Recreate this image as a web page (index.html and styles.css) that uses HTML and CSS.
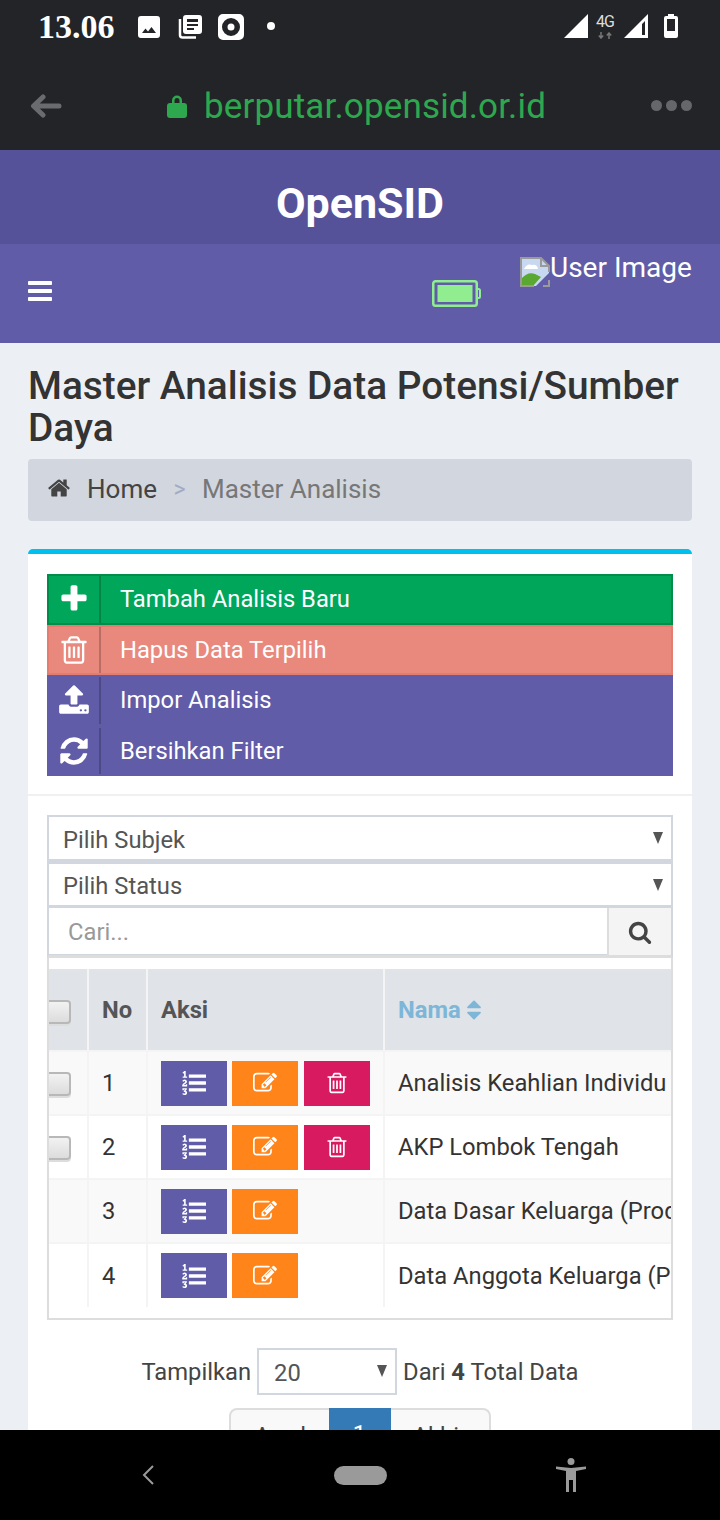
FILE: index.html
```html
<!DOCTYPE html>
<html lang="id">
<head>
  <meta charset="UTF-8">
  <meta name="viewport" content="width=device-width, initial-scale=1.0">
  <title>Master Analisis - OpenSID</title>
  <link rel="stylesheet" href="styles.css">
</head>
<body>
  <svg class="sprites" xmlns="http://www.w3.org/2000/svg">
    <symbol id="i-plus" viewBox="0 0 1792 1792"><path d="M1600 736v192q0 40-28 68t-68 28h-416v416q0 40-28 68t-68 28h-192q-40 0-68-28t-28-68v-416h-416q-40 0-68-28t-28-68v-192q0-40 28-68t68-28h416v-416q0-40 28-68t68-28h192q40 0 68 28t28 68v416h416q40 0 68 28t28 68z"/></symbol>
    <symbol id="i-trash" viewBox="0 0 1792 1792"><path d="M704 736v576q0 14-9 23t-23 9h-64q-14 0-23-9t-9-23v-576q0-14 9-23t23-9h64q14 0 23 9t9 23zm256 0v576q0 14-9 23t-23 9h-64q-14 0-23-9t-9-23v-576q0-14 9-23t23-9h64q14 0 23 9t9 23zm256 0v576q0 14-9 23t-23 9h-64q-14 0-23-9t-9-23v-576q0-14 9-23t23-9h64q14 0 23 9t9 23zm128 724v-948h-896v948q0 22 7 40.5t14.5 27 10.5 8.5h832q3 0 10.5-8.5t14.5-27 7-40.5zm-672-1076h448l-48-117q-7-9-17-11h-317q-10 2-17 11zm928 32v64q0 14-9 23t-23 9h-96v948q0 83-47 143.5t-113 60.5h-832q-66 0-113-58.5t-47-141.5v-952h-96q-14 0-23-9t-9-23v-64q0-14 9-23t23-9h309l70-167q15-37 54-63t79-26h320q40 0 79 26t54 63l70 167h309q14 0 23 9t9 23z"/></symbol>
    <symbol id="i-upload" viewBox="0 0 1792 1792"><path d="M1344 1472q0-26-19-45t-45-19-45 19-19 45 19 45 45 19 45-19 19-45zm256 0q0-26-19-45t-45-19-45 19-19 45 19 45 45 19 45-19 19-45zm128-224v320q0 40-28 68t-68 28h-1472q-40 0-68-28t-28-68v-320q0-40 28-68t68-28h427q21 56 70.5 92t110.5 36h256q61 0 110.5-36t70.5-92h427q40 0 68 28t28 68zm-325-648q-17 40-59 40h-256v448q0 26-19 45t-45 19h-256q-26 0-45-19t-19-45v-448h-256q-42 0-59-40-17-39 14-69l448-448q18-19 45-19t45 19l448 448q31 30 14 69z"/></symbol>
    <symbol id="i-refresh" viewBox="0 0 1792 1792"><path d="M1639 1056q0 5-1 7-64 268-268 434.5t-478 166.5q-146 0-282.5-55t-243.5-157l-129 129q-19 19-45 19t-45-19-19-45v-448q0-26 19-45t45-19h448q26 0 45 19t19 45-19 45l-137 137q71 66 161 102t187 36q134 0 250-65t186-179q11-17 53-117 8-23 30-23h192q13 0 22.5 9.5t9.5 22.5zm25-800v448q0 26-19 45t-45 19h-448q-26 0-45-19t-19-45 19-45l138-138q-148-137-349-137-134 0-250 65t-186 179q-11 17-53 117-8 23-30 23h-199q-13 0-22.5-9.5t-9.5-22.5v-7q65-268 270-434.5t480-166.5q146 0 284 55.5t245 156.5l130-129q19-19 45-19t45 19 19 45z"/></symbol>
    <symbol id="i-search" viewBox="0 0 1792 1792"><path d="M1216 832q0-185-131.5-316.5t-316.5-131.5-316.5 131.5-131.5 316.5 131.5 316.5 316.5 131.5 316.5-131.5 131.5-316.5zm512 832q0 52-38 90t-90 38q-54 0-90-38l-343-342q-179 124-399 124-143 0-273.5-55.5t-225-150-150-225-55.5-273.5 55.5-273.5 150-225 225-150 273.5-55.5 273.5 55.5 225 150 150 225 55.5 273.5q0 220-124 399l343 343q37 37 37 90z"/></symbol>
    <symbol id="i-home" viewBox="0 0 1792 1792"><path d="M1472 992v480q0 26-19 45t-45 19h-384v-384h-256v384h-384q-26 0-45-19t-19-45v-480q0-1 .5-3t.5-3l575-474 575 474q1 2 1 6zm223-69l-62 74q-8 9-21 11h-3q-13 0-21-7l-692-577-692 577q-12 8-24 7-13-2-21-11l-62-74q-8-10-7-23.5t11-20.5l719-599q32-26 76-26t76 26l244 204v-195q0-14 9-23t23-9h192q14 0 23 9t9 23v408l219 182q10 8 11 21.5t-7 23.5z"/></symbol>
    <symbol id="i-bars" viewBox="0 0 1792 1792"><path d="M1664 1344v128q0 26-19 45t-45 19h-1408q-26 0-45-19t-19-45v-128q0-26 19-45t45-19h1408q26 0 45 19t19 45zm0-512v128q0 26-19 45t-45 19h-1408q-26 0-45-19t-19-45v-128q0-26 19-45t45-19h1408q26 0 45 19t19 45zm0-512v128q0 26-19 45t-45 19h-1408q-26 0-45-19t-19-45v-128q0-26 19-45t45-19h1408q26 0 45 19t19 45z"/></symbol>
    <symbol id="i-sort" viewBox="0 0 1792 1792"><path d="M1408 1088q0 26-19 45l-448 448q-19 19-45 19t-45-19l-448-448q-19-19-19-45t19-45 45-19h896q26 0 45 19t19 45zm0-384q0 26-19 45t-45 19h-896q-26 0-45-19t-19-45 19-45l448-448q19-19 45-19t45 19l448 448q19 19 19 45z"/></symbol>
    <symbol id="i-edit" viewBox="0 0 1792 1792"><path d="M888 1184l116-116-152-152-116 116v56h96v96h56zm440-720q-16-16-33 1l-350 350q-17 17-1 33t33-1l350-350q17-17 1-33zm80 594v190q0 119-84.5 203.5t-203.5 84.5h-832q-119 0-203.5-84.5t-84.5-203.5v-832q0-119 84.5-203.5t203.5-84.5h832q63 0 117 25 15 7 18 23 3 17-9 29l-49 49q-14 14-32 8-23-6-45-6h-832q-66 0-113 47t-47 113v832q0 66 47 113t113 47h832q66 0 113-47t47-113v-126q0-13 9-22l64-64q15-15 35-7t20 29zm-96-738l288 288-672 672h-288v-288zm444 132l-92 92-288-288 92-92q28-28 68-28t68 28l152 152q28 28 28 68t-28 68z"/></symbol>
    <symbol id="i-list" viewBox="0 0 1792 1792"><path d="M381 1620q0 80-54.5 126t-135.5 46q-106 0-172-66l57-88q49 45 106 45 29 0 50.5-14.5t21.5-42.5q0-64-105-56l-26-56q8-10 32.5-43.5t42.5-54 37-38.5v-1q-16 0-48.5 1t-48.5 1v53h-106v-152h333v88l-95 115q51 12 81 49t30 88zm2-627v159h-362q-6-36-6-54 0-51 23.5-93t56.5-68 66-47.5 56.5-43.5 23.5-45q0-25-14.5-38.5t-39.5-13.5q-46 0-81 58l-85-59q24-51 71.5-79.5t105.5-28.5q73 0 123 41.5t50 112.5q0 50-34 91.5t-75 64.5-75.5 50.5-35.5 52.5h127v-60h105zm1409 319v192q0 13-9.5 22.5t-22.5 9.5h-1216q-13 0-22.5-9.5t-9.5-22.5v-192q0-14 9-23t23-9h1216q13 0 22.5 9.5t9.5 22.5zm-1408-899v99h-335v-99h107q0-41 .5-122t.5-121v-12h-2q-8 17-50 54l-71-76 136-127h106v404h108zm1408 387v192q0 13-9.5 22.5t-22.5 9.5h-1216q-13 0-22.5-9.5t-9.5-22.5v-192q0-14 9-23t23-9h1216q13 0 22.5 9.5t9.5 22.5zm0-512v192q0 13-9.5 22.5t-22.5 9.5h-1216q-13 0-22.5-9.5t-9.5-22.5v-192q0-14 9-23t23-9h1216q13 0 22.5 9.5t9.5 22.5z"/></symbol>
  </svg>

  <div class="phone">
    <div class="chrome">
      <div class="statusbar">
        <span class="clock">13.06</span>
        <svg class="st st-photo" viewBox="0 0 22 22"><path fill="#fff" fill-rule="evenodd" d="M3 0h16a3 3 0 0 1 3 3v16a3 3 0 0 1-3 3H3a3 3 0 0 1-3-3V3a3 3 0 0 1 3-3zM4 17h14l-4.500-6-3.500 4.500-2.500-3z"/></svg>
        <svg class="st st-news" viewBox="0 0 24 24"><path fill="none" stroke="#fff" stroke-width="2.500" d="M2 4v16a2.500 2.500 0 0 0 2.500 2.500H18"/><path fill="#fff" fill-rule="evenodd" d="M8 0h13a3 3 0 0 1 3 3v13a3 3 0 0 1-3 3H8a3 3 0 0 1-3-3V3a3 3 0 0 1 3-3zM9 4v3h11V4zM9 9v2h11V9zM9 13v2h7v-2z"/></svg>
        <svg class="st st-disc" viewBox="0 0 26 26"><path fill="#fff" fill-rule="evenodd" d="M5 0h16a5 5 0 0 1 5 5v16a5 5 0 0 1-5 5H5a5 5 0 0 1-5-5V5a5 5 0 0 1 5-5zM13 4a9 9 0 1 0 0 18 9 9 0 0 0 0-18zM13 9.500a3.500 3.500 0 1 1 0 7 3.500 3.500 0 0 1 0-7z"/></svg>
        <span class="st-dot"></span>
        <span class="st-spacer"></span>
        <svg class="st st-signal" viewBox="0 0 24 24"><path fill="#fff" d="M24 0v24H0z"/></svg>
        <span class="st-net">4G<svg class="st-arrows" viewBox="0 0 14 7"><path fill="none" stroke="#777" stroke-width="1.500" d="M3 0v6M.8 3.500 3 6l2.200-2.500M11 7V1M8.800 3.500 11 1l2.200 2.500"/></svg></span>
        <svg class="st st-signal2" viewBox="0 0 24 24"><path fill="#fff" fill-rule="evenodd" d="M24 0v24H0zM21 7l-3 3v11h3z"/></svg>
        <svg class="st st-batt" viewBox="0 0 14 24"><path fill="#fff" fill-rule="evenodd" d="M4 0h6v2h2a2 2 0 0 1 2 2v18a2 2 0 0 1-2 2H2a2 2 0 0 1-2-2V4a2 2 0 0 1 2-2h2zM3 5v12h8V5z"/></svg>
      </div>
      <div class="urlbar">
        <svg class="url-back" viewBox="0 0 32 24"><path fill="none" stroke="#6a6b6f" stroke-width="5" stroke-linecap="round" stroke-linejoin="round" d="M13 3 3.500 12 13 21M4 12h25"/></svg>
        <svg class="url-lock" viewBox="0 0 20 24"><path fill="#2ea84f" d="M5 9V6.500a5 5 0 0 1 10 0V9h2a3 3 0 0 1 3 3v9a3 3 0 0 1-3 3H3a3 3 0 0 1-3-3v-9a3 3 0 0 1 3-3zm2.500 0h5V6.500a2.500 2.500 0 0 0-5 0z"/></svg>
        <span class="url-text">berputar.opensid.or.id</span>
        <span class="url-dots"><i></i><i></i><i></i></span>
      </div>
    </div>

    <div class="viewport">
      <header class="logo">OpenSID</header>
      <nav class="navbar">
        <svg class="ico nav-bars"><use href="#i-bars"/></svg>
        <svg class="nav-batt" viewBox="0 0 49 27"><path fill="none" stroke="#90ee90" stroke-width="2.500" d="M3.500 1.250h39a2.250 2.250 0 0 1 2.250 2.250v20a2.250 2.250 0 0 1-2.250 2.250h-39a2.250 2.250 0 0 1-2.250-2.250v-20a2.250 2.250 0 0 1 2.250-2.250z"/><path fill="#90ee90" d="M5.500 5h35v17h-35z"/><path fill="none" stroke="#90ee90" stroke-width="2" d="M45 9h1.500a1.500 1.500 0 0 1 1.500 1.500v6a1.500 1.500 0 0 1-1.500 1.500H45"/></svg>
        <div class="nav-user">
          <svg class="broken" viewBox="0 0 30 30">
            <path fill="#c8d8f0" d="M1 1h20l8 8v7L16 29H1z"/>
            <path fill="#fff" d="M4 12q3-6 8-4 5-1 6 4z"/>
            <path fill="#5aa832" d="M1 29v-7q7-8 14-5l6 3-8 9z"/>
            <path fill="none" stroke="#9a9a9a" stroke-width="2" d="M29 15V9l-8-8H1v28h13M21 1v8h8M23 29h6v-6"/>
          </svg>
          <span>User Image</span>
        </div>
      </nav>

      <main class="content">
        <h1>Master Analisis Data Potensi/Sumber Daya</h1>
        <ol class="breadcrumb">
          <li><svg class="ico crumb-home"><use href="#i-home"/></svg>Home</li>
          <li class="crumb-sep">&gt;</li>
          <li class="crumb-active">Master Analisis</li>
        </ol>

        <section class="box">
          <div class="actions">
            <a class="act act-green"><span class="act-ico"><svg class="ico"><use href="#i-plus"/></svg></span>Tambah Analisis Baru</a>
            <a class="act act-salmon"><span class="act-ico"><svg class="ico"><use href="#i-trash"/></svg></span>Hapus Data Terpilih</a>
            <a class="act act-purple"><span class="act-ico"><svg class="ico"><use href="#i-upload"/></svg></span>Impor Analisis</a>
            <a class="act act-purple"><span class="act-ico"><svg class="ico"><use href="#i-refresh"/></svg></span>Bersihkan Filter</a>
          </div>

          <div class="box-body">
            <div class="fake-select">Pilih Subjek</div>
            <div class="fake-select">Pilih Status</div>
            <div class="search">
              <div class="search-input">Cari...</div>
              <div class="search-btn"><svg class="ico"><use href="#i-search"/></svg></div>
            </div>

            <div class="table-wrap">
              <table class="data">
                <thead>
                  <tr>
                    <th class="c-check"><span class="check"></span></th>
                    <th class="c-no">No</th>
                    <th class="c-aksi">Aksi</th>
                    <th class="c-nama"><span class="sortable">Nama <svg class="ico"><use href="#i-sort"/></svg></span></th>
                  </tr>
                </thead>
                <tbody>
                  <tr>
                    <td class="c-check"><span class="check"></span></td>
                    <td>1</td>
                    <td><div class="btns"><a class="btn b-purple"><svg class="ico"><use href="#i-list"/></svg></a><a class="btn b-orange"><svg class="ico"><use href="#i-edit"/></svg></a><a class="btn b-pink"><svg class="ico"><use href="#i-trash"/></svg></a></div></td>
                    <td>Analisis Keahlian Individu</td>
                  </tr>
                  <tr>
                    <td class="c-check"><span class="check"></span></td>
                    <td>2</td>
                    <td><div class="btns"><a class="btn b-purple"><svg class="ico"><use href="#i-list"/></svg></a><a class="btn b-orange"><svg class="ico"><use href="#i-edit"/></svg></a><a class="btn b-pink"><svg class="ico"><use href="#i-trash"/></svg></a></div></td>
                    <td>AKP Lombok Tengah</td>
                  </tr>
                  <tr>
                    <td class="c-check"></td>
                    <td>3</td>
                    <td><div class="btns"><a class="btn b-purple"><svg class="ico"><use href="#i-list"/></svg></a><a class="btn b-orange"><svg class="ico"><use href="#i-edit"/></svg></a></div></td>
                    <td>Data Dasar Keluarga (Prodeskel)</td>
                  </tr>
                  <tr>
                    <td class="c-check"></td>
                    <td>4</td>
                    <td><div class="btns"><a class="btn b-purple"><svg class="ico"><use href="#i-list"/></svg></a><a class="btn b-orange"><svg class="ico"><use href="#i-edit"/></svg></a></div></td>
                    <td>Data Anggota Keluarga (Prodeskel)</td>
                  </tr>
                </tbody>
              </table>
            </div>

            <div class="pager-info">
              Tampilkan
              <div class="fake-select per-page">20</div>
              <span>Dari <b>4</b> Total Data</span>
            </div>
            <ul class="pagination">
              <li>Awal</li>
              <li class="active">1</li>
              <li>Akhir</li>
            </ul>
          </div>
        </section>
      </main>
    </div>

    <div class="navpad">
      <svg class="pad-back" viewBox="0 0 12 20"><path fill="none" stroke="#9a9a9a" stroke-width="2" d="M11 1 2 10l9 9"/></svg>
      <span class="pad-home"></span>
      <svg class="pad-a11y" viewBox="0 0 30 34"><circle cx="15" cy="3.500" r="3.500" fill="#9a9a9a"/><path fill="#9a9a9a" d="M0 8.500 15 10l15-1.500v2.500l-10 2v21h-3V22h-4v12h-3V13L0 11z"/></svg>
    </div>
  </div>
</body>
</html>
```

FILE: styles.css
```css
* {
  box-sizing: border-box;
}
html, body {
  margin: 0;
  padding: 0;
}
body {
  font-family: Roboto, "Liberation Sans", sans-serif;
  font-size: 23.75px;
  color: #333;
  background: #000;
}
.sprites {
  display: none;
}
.ico {
  display: block;
  fill: currentColor;
}
.phone {
  width: 720px;
  height: 1520px;
  display: flex;
  flex-direction: column;
  overflow: hidden;
}

/* android status bar and browser url bar */
.chrome {
  height: 150px;
  flex: none;
  background: #232427;
}
.statusbar {
  height: 60px;
  padding: 11px 42px 0 38px;
  display: flex;
  align-items: flex-start;
}
.clock {
  font-family: "Liberation Serif", serif;
  font-weight: 700;
  font-size: 34px;
  line-height: 32px;
  color: #fff;
  width: 100px;
}
.st {
  display: block;
  flex: none;
}
.st-photo {
  width: 22px;
  height: 22px;
  margin-top: 5px;
}
.st-news {
  width: 24px;
  height: 24px;
  margin: 4px 0 0 18px;
}
.st-disc {
  width: 26px;
  height: 26px;
  margin: 3px 0 0 16px;
}
.st-dot {
  width: 8px;
  height: 8px;
  border-radius: 50%;
  background: #fff;
  margin: 11px 0 0 23px;
}
.st-spacer {
  flex: 1;
}
.st-signal, .st-signal2 {
  width: 24px;
  height: 24px;
  margin-top: 3px;
}
.st-net {
  width: 18px;
  margin: 3px 0 0 8px;
  color: #ddd;
  font-size: 16px;
  line-height: 16px;
  letter-spacing: -1px;
  text-align: center;
  white-space: nowrap;
}
.st-arrows {
  display: block;
  width: 14px;
  height: 7px;
  margin: 2px auto 0;
}
.st-signal2 {
  margin-left: 10px;
}
.st-batt {
  width: 14px;
  height: 24px;
  margin: 3px 0 0 16px;
}
.urlbar {
  height: 90px;
  padding: 0 28px 0 30px;
  display: flex;
  align-items: center;
}
.url-back {
  width: 32px;
  height: 24px;
  flex: none;
  margin-top: 1px;
}
.url-lock {
  width: 20px;
  height: 24px;
  flex: none;
  margin: 1px 0 0 105px;
}
.url-text {
  margin-left: 17px;
  font-size: 35px;
  letter-spacing: 0.15px;
  line-height: 40px;
  color: #2ea84f;
  flex: 1;
  margin-top: 4px;
}
.url-dots {
  display: flex;
  gap: 4px;
}
.url-dots i {
  width: 11px;
  height: 11px;
  border-radius: 50%;
  background: #66676b;
}

/* page */
.viewport {
  flex: 1;
  min-height: 0;
  overflow: hidden;
  background: #ecf0f5;
}
.logo {
  height: 94px;
  background: #56529a;
  color: #fff;
  font-size: 43px;
  font-weight: 700;
  line-height: 107px;
  text-align: center;
}
.navbar {
  height: 99px;
  background: #605ca8;
  color: #fff;
  padding-left: 26px;
  display: flex;
  align-items: flex-start;
}
.nav-bars {
  width: 28px;
  height: 28px;
  margin-top: 33px;
  flex: none;
}
.nav-batt {
  width: 49px;
  height: 27px;
  margin: 36px 0 0 378px;
  flex: none;
}
.nav-user {
  margin: 8px 0 0 39px;
  display: flex;
  align-items: flex-start;
  white-space: nowrap;
  font-size: 28px;
  line-height: 31px;
}
.broken {
  width: 30px;
  height: 30px;
  margin-top: 5px;
  flex: none;
}
.content {
  padding: 22px 28px 0;
}
h1 {
  margin: 0;
  font-size: 38.8px;
  font-weight: 500;
  line-height: 42px;
  color: #333;
}
.breadcrumb {
  list-style: none;
  margin: 10px 0 0;
  height: 62px;
  padding: 0 19px 2px;
  display: flex;
  align-items: center;
  background: #d2d6de;
  border-radius: 4px;
  font-size: 26px;
  color: #444;
}
.breadcrumb li {
  display: flex;
  align-items: center;
}
.crumb-home {
  width: 24px;
  height: 24px;
  margin-right: 16px;
  margin-top: -2px;
}
.crumb-sep {
  color: #a3abc4;
  margin: 0 16.500px;
  font-size: 23px;
}
.crumb-active {
  color: #777;
}
.box {
  margin-top: 28px;
  background: #fff;
  border-top: 5px solid #00c0ef;
  border-radius: 5px 5px 0 0;
  padding-top: 20px;
}

/* action menu */
.actions {
  margin: 0 19px;
  padding-bottom: 18px;
}
.act {
  display: flex;
  align-items: center;
  height: 50.500px;
  color: #fff;
}
.act-ico {
  width: 52px;
  height: 100%;
  flex: none;
  margin-right: 19px;
  display: flex;
  align-items: center;
  justify-content: center;
  border-right: 2px solid rgba(0,0,0,0.2);
}
.act-green {
  background: #00a65a;
  border: 2px solid #008d4c;
}
.act-salmon {
  background: #e9897e;
  border: 2px solid #e47c70;
}
.act-purple {
  background: #605ca8;
  padding: 2px 0 2px 2px;
}
.act-ico .ico {
  width: 32px;
  height: 32px;
}
.box-body {
  border-top: 2px solid #f0f0f0;
  padding: 19px 19px 0;
}
.fake-select {
  position: relative;
  height: 46px;
  border: 2px solid #d2d6de;
  border-bottom-width: 3px;
  padding-left: 14px;
  line-height: 45px;
  color: #555;
  background: #fff;
}
.fake-select:first-child {
  height: 47px;
  line-height: 47px;
}
.fake-select::after {
  content: "";
  position: absolute;
  right: 8px;
  top: 15px;
  border-style: solid;
  border-width: 12px 5.500px 0;
  border-color: #555 transparent transparent;
}
.search {
  display: flex;
  height: 50px;
  border-bottom: 3px solid #ddd;
  border-right: 2px solid #d2d6de;
  border-left: 2px solid #d2d6de;
}
.search-input {
  flex: 1;
  padding-left: 19px;
  line-height: 48px;
  color: #999;
  border-bottom: 1px solid #d2d6de;
}
.search-btn {
  width: 64px;
  flex: none;
  background: #f4f4f4;
  border-left: 2px solid #ddd;
  color: #444;
  display: flex;
  align-items: center;
  justify-content: center;
}
.search-btn .ico {
  width: 24px;
  height: 24px;
}

/* table scrolled sideways inside its frame */
.table-wrap {
  padding-top: 11px;
  height: 362px;
  overflow: hidden;
  border: 2px solid #ddd;
  border-top: 0;
}
.data {
  border-collapse: collapse;
  table-layout: fixed;
  width: 900px;
  margin-left: -28px;
}
.data th, .data td {
  border: 2px solid #f4f4f4;
  padding: 0 13px;
  text-align: left;
  white-space: nowrap;
  overflow: hidden;
}
.data th {
  height: 82px;
  background: #e0e3e8;
  color: #555;
  font-weight: 700;
  border-top: 0;
  border-bottom: 0;
}
.data td {
  height: 64px;
  color: #333;
}
.data tbody tr:last-child td {
  border-bottom: 0;
}
.data tbody tr:nth-child(odd) td {
  background: #f9f9f9;
}
.data .c-check {
  width: 66px;
  padding: 0 0 0 28px;
}
.data .c-no {
  width: 59px;
}
.data .c-aksi {
  width: 237px;
}
.data .c-nama {
  width: 538px;
}
.sortable {
  display: flex;
  align-items: center;
  gap: 1px;
  color: #7eb6d8;
}
.sortable .ico {
  width: 24px;
  height: 26px;
}
.check {
  display: block;
  width: 22px;
  height: 24px;
  margin-top: 1px;
  margin-left: -2px;
  background: linear-gradient(#f2f2f2, #dcdcdc);
  border: 2px solid #b8b8b8;
  border-left: 0;
  border-radius: 0 4px 4px 0;
  box-shadow: 0 2px 0 #ddd;
}
th .check {
  margin-top: 5px;
}
.btns {
  display: flex;
  gap: 5px;
}
.btn {
  width: 66px;
  height: 45px;
  color: #fff;
  display: flex;
  align-items: center;
  justify-content: center;
}
.btn .ico {
  width: 24px;
  height: 24px;
}
.b-purple {
  background: #605ca8;
}
.b-orange {
  background: #ff851b;
}
.b-pink {
  background: #d81b60;
  margin-left: 1px;
}

/* paging */
.pager-info {
  margin-top: 28px;
  display: flex;
  justify-content: center;
  align-items: center;
  gap: 6px;
  color: #444;
}
.pager-info .per-page {
  width: 140px;
  height: 47px;
  border-bottom-width: 2px;
  padding-left: 15px;
  line-height: 47px;
}
.per-page::after {
  top: 15px;
}
.pager-info b {
  font-weight: 700;
}
.pagination {
  list-style: none;
  width: 262px;
  margin: 13px auto 0;
  padding: 0;
  display: flex;
  height: 60px;
  border: 2px solid #ddd;
  border-radius: 8px;
  background: #f9f9f9;
  color: #444;
}
.pagination li {
  flex: 1;
  text-align: center;
  line-height: 52px;
}
.pagination .active {
  flex: none;
  width: 62px;
  margin-top: -2px;
  margin-left: -1px;
  background: #337ab7;
  color: #fff;
}

/* android navigation */
.navpad {
  height: 90px;
  flex: none;
  background: #000;
  display: flex;
  align-items: center;
  padding-left: 142px;
}
.pad-back {
  width: 12px;
  height: 20px;
}
.pad-home {
  width: 53px;
  height: 19px;
  border-radius: 10px;
  background: #9a9a9a;
  margin-left: 180px;
}
.pad-a11y {
  width: 30px;
  height: 34px;
  margin-left: 169px;
}
```
